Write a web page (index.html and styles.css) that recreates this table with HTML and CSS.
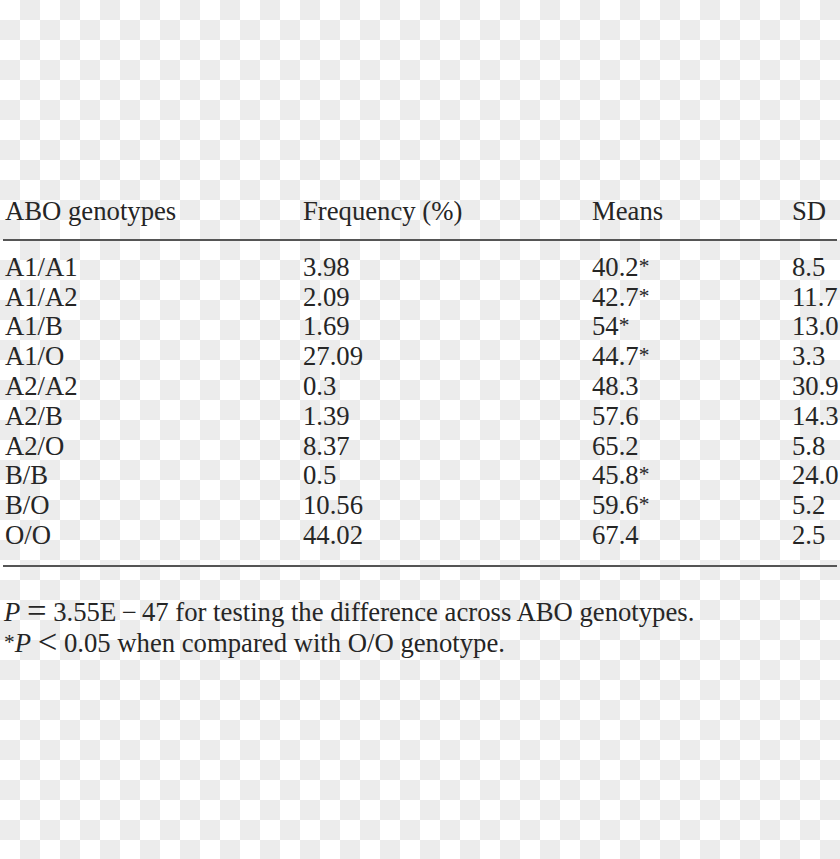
FILE: index.html
```html
<!DOCTYPE html>
<html lang="en">
<head>
<meta charset="utf-8">
<title>ABO genotypes</title>
<link rel="stylesheet" href="styles.css">
</head>
<body>
<div class="page">
  <div class="table">
    <div class="row head">
      <span>ABO genotypes</span><span>Frequency (%)</span><span>Means</span><span>SD</span>
    </div>
    <div class="body">
      <div class="row"><span>A1/A1</span><span>3.98</span><span>40.2<span class="ast">*</span></span><span>8.5</span></div>
      <div class="row"><span>A1/A2</span><span>2.09</span><span>42.7<span class="ast">*</span></span><span>11.7</span></div>
      <div class="row"><span>A1/B</span><span>1.69</span><span>54<span class="ast">*</span></span><span>13.0</span></div>
      <div class="row"><span>A1/O</span><span>27.09</span><span>44.7<span class="ast">*</span></span><span>3.3</span></div>
      <div class="row"><span>A2/A2</span><span>0.3</span><span>48.3</span><span>30.9</span></div>
      <div class="row"><span>A2/B</span><span>1.39</span><span>57.6</span><span>14.3</span></div>
      <div class="row"><span>A2/O</span><span>8.37</span><span>65.2</span><span>5.8</span></div>
      <div class="row"><span>B/B</span><span>0.5</span><span>45.8<span class="ast">*</span></span><span>24.0</span></div>
      <div class="row"><span>B/O</span><span>10.56</span><span>59.6<span class="ast">*</span></span><span>5.2</span></div>
      <div class="row"><span>O/O</span><span>44.02</span><span>67.4</span><span>2.5</span></div>
    </div>
  </div>
  <div class="notes">
    <p><i>P</i> <span class="op">=</span> 3.55E&thinsp;&minus;&thinsp;47 for testing the difference across ABO genotypes.</p>
    <p><span class="ast">*</span><i>P</i> <span class="op">&lt;</span> 0.05 when compared with O/O genotype.</p>
  </div>
</div>
</body>
</html>
```
FILE: styles.css
```css
html, body {
  margin: 0;
  padding: 0;
  overflow: hidden;
}
body {
  background-color: #fff;
  background-image: conic-gradient(#ececec 0 25%, #fff 0 50%, #ececec 0 75%, #fff 0);
  background-size: 40px 40px;
  background-position: 0 0;
  font-family: "Liberation Serif", "Times New Roman", serif;
  font-size: 26.7px;
  color: #262626;
  width: 840px;
  height: 859px;
}
.page {
  padding-top: 197px;
}
.table {
  margin-left: 3px;
  width: 834px;
}
.row {
  display: grid;
  grid-template-columns: 298px 289px 200px 1fr;
  padding-left: 2px;
  line-height: 29.8px;
  white-space: nowrap;
}
.head {
  padding-bottom: 12px;
  border-bottom: 2px solid #555;
}
.body {
  padding-top: 12px;
  padding-bottom: 14px;
  border-bottom: 2px solid #555;
}
.notes {
  margin-top: 30px;
  padding-left: 4px;
  line-height: 31px;
}
.notes p {
  margin: 0;
  white-space: nowrap;
}
.ast {
  font-size: 0.8em;
  vertical-align: 0.12em;
  line-height: 0;
}
.op {
  font-size: 1.3em;
  line-height: 0;
  vertical-align: -0.04em;
}
```
